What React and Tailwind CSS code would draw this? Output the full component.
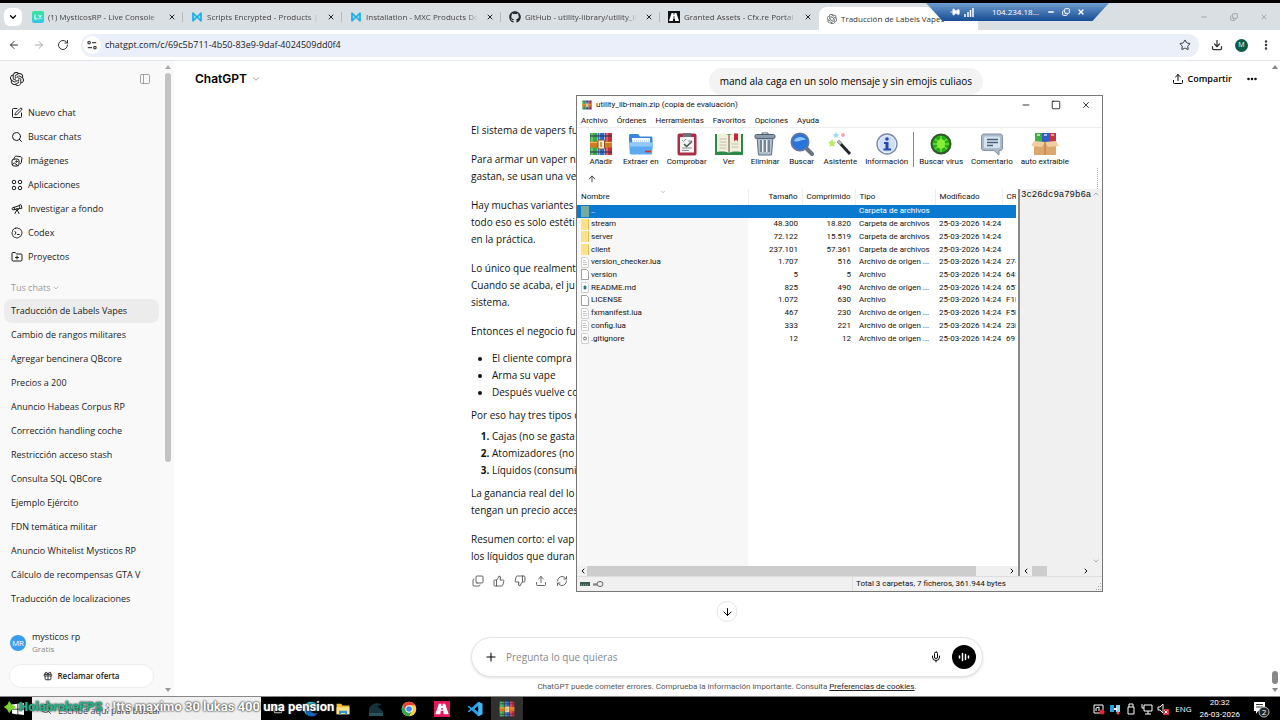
import {
  ArrowDown, ArrowLeft, ArrowRight, ArrowUp, ChevronDown, ChevronLeft, ChevronRight, ChevronUp, Copy, Download,
  Ellipsis, EllipsisVertical, FolderPlus, Gift, Mic, Minus, PanelLeft, Pin, Plus, RefreshCw, RotateCw, Search,
  Square, SquarePen, Star, Telescope, ThumbsDown, ThumbsUp, Upload, X,
} from 'lucide-react';
import { SiOpenai } from 'react-icons/si';
import { FaGithub } from 'react-icons/fa';

const ConsoleIcon = () => (
  <svg viewBox="0 0 12 12" className="size-3 shrink-0">
    <defs>
      <linearGradient id="console" x1="0" y1="0" x2="0" y2="1">
        <stop offset="0" stopColor="#35e59a" />
        <stop offset="1" stopColor="#35c4e8" />
      </linearGradient>
    </defs>
    <rect width="12" height="12" rx="2" fill="url(#console)" />
    <path d="M3 3.5v4.5h2.5M6.5 4l3 4M9.5 4l-3 4" stroke="#d9fff1" strokeWidth="1.2" fill="none" />
  </svg>
);

const MxcIcon = () => (
  <svg viewBox="0 0 12 12" className="size-3 shrink-0">
    <path d="M1 1.500v9L6 6zM11 1.500v9L6 6z" fill="#8fdcf5" />
    <path d="M2 1.500v9M10 1.500v9M2 2l8 8M10 2l-8 8" stroke="#1cade4" strokeWidth="1.600" fill="none" />
  </svg>
);

const CfxIcon = ({ bg, className }) => (
  <svg viewBox="0 0 12 12" className={className}>
    <rect width="12" height="12" fill={bg} />
    <path d="M3.600 2h1.900v1.600h1V2h1.900L11 10H7.200L6.900 7.400H5.100L4.800 10H1z" fill="#fff" />
    <path d="M5.300 5.400h1.400l.1 1H5.200z" fill={bg} />
  </svg>
);

const ImagesIcon = ({ className }) => (
  <svg viewBox="0 0 24 24" className={className} fill="none" stroke="currentColor" strokeWidth="2" strokeLinecap="round">
    <rect x="2" y="8" width="14" height="14" rx="4" />
    <path d="M7 5c.5-2 2-3 4-2.700l8 1c2 .3 3 2 2.700 4l-1 7.500c-.2 1.500-.9 2.300-2 2.700M3 19l3.500-3 7 5" />
    <circle cx="11" cy="13" r="1.500" />
  </svg>
);

const AppsIcon = ({ className }) => (
  <svg viewBox="0 0 24 24" className={className} fill="none" stroke="currentColor" strokeWidth="2">
    <circle cx="6" cy="6" r="3.500" />
    <circle cx="18" cy="6" r="3.500" />
    <circle cx="6" cy="18" r="3.500" />
    <circle cx="18" cy="18" r="3.500" />
  </svg>
);

const CodexIcon = ({ className }) => (
  <svg viewBox="0 0 24 24" className={className} fill="none" stroke="currentColor" strokeWidth="2" strokeLinecap="round">
    <path d="M9 2.500c2-1 4-1 6 .5 3 0 5 2 5.500 4.500 1.500 2 2 4.500.5 7 0 3-2 5-4.500 5.500-2 2-5 2.500-7.500 1-3 0-5-2-5.500-4.500-1.500-2-2-5-.5-7.500C3 5 6 2.500 9 2.500z" />
    <path d="m8 9 2 3-2 3M13 15h3.500" />
  </svg>
);

const RarIcon = ({ className }) => (
  <svg viewBox="0 0 24 24" className={className}>
    <rect x="1" y="1" width="7" height="22" fill="#3da648" />
    <rect x="8.500" y="1" width="7" height="22" fill="#3269c8" />
    <rect x="16" y="1" width="7" height="22" fill="#c82d3b" />
    <path d="M3 1v22M10.500 1v22M18 1v22" stroke="#fff" strokeOpacity=".45" strokeWidth="1.200" />
    <path d="M1 4h22M1 20h22" stroke="#28304f" strokeWidth="1.600" strokeOpacity=".7" />
    <path d="M1 9.500h22v6H1z" fill="#d07a24" />
    <path d="M1 10.500h22" stroke="#f8c05d" strokeWidth="1" />
    <rect x="9" y="8" width="6.500" height="9" rx="1" fill="#f7edd0" stroke="#8a5320" />
    <path d="M12 10v5" stroke="#b98131" strokeWidth="1.500" />
  </svg>
);

const ExtractIcon = ({ className }) => (
  <svg viewBox="0 0 24 24" className={className}>
    <path d="M0 6.500V3.500C0 2.500.6 2 1.500 2H9l2 2.500h11c1 0 1.500.5 1.500 1.500v5H0z" fill="#3a87dc" />
    <path d="M3 6h18v6H3z" fill="#f4f9ff" />
    <path d="M0 10.500h24l-.8 10.500c-.1 1-.7 1.500-1.500 1.500H2.300c-.9 0-1.400-.5-1.500-1.500z" fill="#5da9f0" />
    <path d="M0 10.500h24l-.4 4H.4z" fill="#91caf9" />
    <path d="M3 9h18" stroke="#9db9d8" strokeDasharray="1 1" />
    <path d="M16 19.500h6" stroke="#d83131" strokeWidth="1.700" />
  </svg>
);

const TestIcon = ({ className }) => (
  <svg viewBox="0 0 24 24" className={className}>
    <rect x="2.500" y="1.500" width="19" height="22" rx="2" fill="#ad2f45" />
    <path d="M5 5h14v15.500H5z" fill="#f5f6f4" />
    <path d="M8 1h8v4H8z" fill="#6f737d" />
    <path d="m7 8 1.500 1.500L11 7m2 2h4M7 16h10M7 18.500h7" stroke="#8b9299" fill="none" />
    <path d="m9 12 2.500 2.500L17 9.500" stroke="#3f5a48" strokeWidth="1.600" fill="none" />
  </svg>
);

const BookIcon = ({ className }) => (
  <svg viewBox="0 0 28 24" className={className}>
    <path d="M0 2h28v21H0z" fill="#2d8948" />
    <path d="M2 2c5-1 9-.5 12 1 3-1.500 7-2 12-1v18c-5-.8-9-.4-12 1-3-1.400-7-1.800-12-1z" fill="#f3efdd" />
    <path d="M14 3v18" stroke="#8b8470" strokeWidth="1.500" />
    <path d="M4.500 7h7M4.500 10h7M4.500 13h7M4.500 16h7M16.500 12h7M16.500 15h7" stroke="#c5c0ad" />
    <path d="M19 1.500h4v8l-2-1.800-2 1.800z" fill="#c32639" />
  </svg>
);

const TrashIcon = ({ className }) => (
  <svg viewBox="0 0 24 24" className={className}>
    <path d="M4 5h16l-1.500 18h-13z" fill="#b2bfcc" stroke="#5e7082" />
    <path d="M8 8v12M12 8v12M16 8v12" stroke="#657789" strokeWidth="1.600" />
    <path d="M9.500 8v12M13.500 8v12" stroke="#eef4f8" />
    <rect x="2" y="2.500" width="20" height="4" rx="1.500" fill="#8b9baa" stroke="#4e6073" />
    <path d="M9 2.500V1h6v1.500" stroke="#4e6073" fill="none" />
  </svg>
);

const FindIcon = ({ className }) => (
  <svg viewBox="0 0 24 24" className={className}>
    <path d="m15 15 7 7" stroke="#6b737f" strokeWidth="4" strokeLinecap="round" />
    <circle cx="10" cy="10" r="8.500" fill="#2774dd" stroke="#5c74a8" strokeWidth="2" />
    <path d="M4 9c1-4 9-6 12-1-4-1-7 3-12 1z" fill="#8fc4fa" />
  </svg>
);

const WizardIcon = ({ className }) => (
  <svg viewBox="0 0 24 24" className={className}>
    <path d="m10 9 12 13" stroke="#25262b" strokeWidth="3" />
    <path d="m10 9 3 3" stroke="#aeb2b9" strokeWidth="3" />
    <path d="m4 7 1.300 2.500L8 10l-2 2 .5 3L4 13.500 1.500 15l.5-3-2-2 2.700-.5z" fill="#bce865" />
    <path d="m8 0 1 2 2 .5-1.500 1.500.3 2L8 5l-2 1 .5-2L5 2.500 7 2z" fill="#96dcf5" />
    <circle cx="15" cy="3" r="2" fill="#f5a7b9" />
  </svg>
);

const InfoIcon = ({ className }) => (
  <svg viewBox="0 0 24 24" className={className}>
    <circle cx="12" cy="12" r="10" fill="#e5edfa" stroke="#7988a8" strokeWidth="1.400" />
    <circle cx="12" cy="12" r="8" fill="#cfdef8" />
    <circle cx="12" cy="7" r="1.800" fill="#2649ac" />
    <path d="M9 10h4.500v6.500H16v2H8.500v-2h2V12H9z" fill="#2649ac" />
  </svg>
);

const VirusIcon = ({ className }) => (
  <svg viewBox="0 0 24 24" className={className}>
    <circle cx="12" cy="12" r="9.500" fill="#27a91b" stroke="#31572b" strokeWidth="2" />
    <path d="m6 7 12 10M18 7 6 17M12 4v16M4 12h16" stroke="#68e32e" strokeWidth="1.600" />
    <ellipse cx="12" cy="12" rx="4" ry="5" fill="#85ee35" />
  </svg>
);

const CommentIcon = ({ className }) => (
  <svg viewBox="0 0 24 24" className={className}>
    <path d="M4 2h16c1.700 0 2.500 1 2.500 2.500V16c0 1.500-.8 2.500-2.500 2.500h-1V23l-5-4.500H4c-1.700 0-2.500-1-2.500-2.500V4.500C1.500 3 2.300 2 4 2z" fill="#a9bacb" stroke="#8190a0" />
    <rect x="4" y="4.500" width="16" height="11.500" rx="1" fill="#d6e2ec" />
    <path d="M7 7.500h11M7 10.500h11M7 13.500h6" stroke="#47617a" strokeWidth="1.400" />
  </svg>
);

const SfxIcon = ({ className }) => (
  <svg viewBox="0 0 28 24" className={className}>
    <path d="M4 1h7v10H4z" fill="#3fac45" />
    <path d="M11 1h7v10h-7z" fill="#315fc5" />
    <path d="M18 1h7v10h-7z" fill="#c93242" />
    <path d="M6 3h3M13 3h3M20 3h3" stroke="#fff" strokeOpacity=".6" strokeWidth="2" />
    <path d="M3 10h22v13H3z" fill="#dda66f" />
    <path d="m3 9-3 5 11 1 3-5zM25 9l3 5-11 1-3-5z" fill="#f2cda1" />
    <path d="M14 10v13" stroke="#b87a45" />
  </svg>
);

const VsCodeIcon = ({ className }) => (
  <svg viewBox="0 0 24 24" className={className}>
    <path d="m17 1 6 3v16l-6 3L7 13.800l-4 3-2-1L5 12 1 8.300l2-1 4 2.900zm0 6-6 5 6 5z" fill="#2b9fe6" />
    <path d="m17 1 6 3v16l-6 3z" fill="#43b4f2" />
  </svg>
);

const ChromeIcon = ({ className }) => (
  <svg viewBox="0 0 24 24" className={className}>
    <circle cx="12" cy="12" r="11" fill="#ffcd40" />
    <path d="M2.500 6.500A11 11 0 0 1 21.500 6.500H12L7.200 14.700z" fill="#e94235" />
    <path d="M2.500 6.500A11 11 0 0 0 12 23l4.800-8.300H7.200z" fill="#34a353" />
    <circle cx="12" cy="12" r="5.500" fill="#fff" />
    <circle cx="12" cy="12" r="4.200" fill="#4285f4" />
  </svg>
);

const EdgeIcon = ({ className }) => (
  <svg viewBox="0 0 24 24" className={className}>
    <path d="M1 12C1 5 6 1 12 1c7 0 11 5 11 9 0 3-2 5-5 5-2 0-3-1-2-2 0-4-8-6-11-1-2 4 1 9 6 11C5 22 1 17 1 12z" fill="#2db7d2" />
    <path d="M5 12c-2 4 1 9 6 11 5 1 9-2 11-5-6 2-11-1-11-6-2-2-5-2-6 0z" fill="#1767c0" />
  </svg>
);

const ExplorerIcon = ({ className }) => (
  <svg viewBox="0 0 24 24" className={className}>
    <path d="M1 3h8l2 3h12v15H1z" fill="#f2bd3a" />
    <path d="M1 9h22v12H1z" fill="#fbe08a" />
    <path d="M5 22v-7h14v7h-4v-3H9v3z" fill="#3a94d3" />
  </svg>
);

const FileIcon = ({ kind }) => {
  if (kind === 'up') return <span className="block h-[11px] w-2 bg-[#77ab9f]" />;
  if (kind === 'folder') return <span className="block h-[11px] w-2 rounded-[1px] border-r border-[#e2bf55] bg-[#fbe288]" />;
  return (
    <svg viewBox="0 0 8 11" className="h-[11px] w-2" fill="#fff" stroke={kind === 'file' ? '#888' : '#c4c4c4'} strokeWidth=".8">
      <path d="M.5.500h5l2 2v8h-7z" />
      {kind === 'code' && <path d="M2 3.500h3M2 5.500h4M2 7.500h4" stroke="#b5b5b5" />}
      {kind === 'md' && <path d="M3 4h2v3H3z" fill="#28758a" stroke="#28758a" />}
      {kind === 'gear' && <circle cx="4" cy="5.500" r="1.500" stroke="#555" />}
    </svg>
  );
};

const tabs = [
  { title: '(1) MysticosRP - Live Console', icon: <ConsoleIcon /> },
  { title: 'Scripts Encrypted - Products | M', icon: <MxcIcon /> },
  { title: 'Installation - MXC Products Doc', icon: <MxcIcon /> },
  { title: 'GitHub - utility-library/utility_lib', icon: <FaGithub className="size-3 shrink-0 text-[#24292f]" /> },
  { title: 'Granted Assets - Cfx.re Portal', icon: <CfxIcon bg="#101216" className="size-3 shrink-0" /> },
];

const navItems = [
  { label: 'Nuevo chat', Icon: SquarePen },
  { label: 'Buscar chats', Icon: Search },
  { label: 'Imágenes', Icon: ImagesIcon },
  { label: 'Aplicaciones', Icon: AppsIcon },
  { label: 'Investigar a fondo', Icon: Telescope },
  { label: 'Codex', Icon: CodexIcon },
  { label: 'Proyectos', Icon: FolderPlus },
];

const chats = [
  'Traducción de Labels Vapes', 'Cambio de rangos militares', 'Agregar bencinera QBcore', 'Precios a 200',
  'Anuncio Habeas Corpus RP', 'Corrección handling coche', 'Restricción acceso stash', 'Consulta SQL QBCore',
  'Ejemplo Ejército', 'FDN temática militar', 'Anuncio Whitelist Mysticos RP', 'Cálculo de recompensas GTA V',
  'Traducción de localizaciones',
];

const tools = [
  { label: 'Añadir', Icon: RarIcon },
  { label: 'Extraer en', Icon: ExtractIcon },
  { label: 'Comprobar', Icon: TestIcon },
  { label: 'Ver', Icon: BookIcon, wide: true },
  { label: 'Eliminar', Icon: TrashIcon },
  { label: 'Buscar', Icon: FindIcon },
  { label: 'Asistente', Icon: WizardIcon },
  { label: 'Información', Icon: InfoIcon },
];

const moreTools = [
  { label: 'Buscar virus', Icon: VirusIcon },
  { label: 'Comentario', Icon: CommentIcon },
  { label: 'auto extraíble', Icon: SfxIcon, wide: true },
];

const date = '25-03-2026 14:24';
const files = [
  ['up', '..', '', '', 'Carpeta de archivos', '', ''],
  ['folder', 'stream', '48.300', '18.820', 'Carpeta de archivos', date, ''],
  ['folder', 'server', '72.122', '15.519', 'Carpeta de archivos', date, ''],
  ['folder', 'client', '237.101', '57.361', 'Carpeta de archivos', date, ''],
  ['code', 'version_checker.lua', '1.707', '516', 'Archivo de origen ...', date, '274'],
  ['file', 'version', '5', '5', 'Archivo', date, '645'],
  ['md', 'README.md', '825', '490', 'Archivo de origen ...', date, '657'],
  ['file', 'LICENSE', '1.072', '630', 'Archivo', date, 'F1E'],
  ['code', 'fxmanifest.lua', '467', '230', 'Archivo de origen ...', date, 'F5D'],
  ['code', 'config.lua', '333', '221', 'Archivo de origen ...', date, '23E'],
  ['gear', '.gitignore', '12', '12', 'Archivo de origen ...', date, '691'],
];

const BrowserChrome = () => (
  <header className="shrink-0 border-b border-[#e3e5e8] bg-white text-[#444]">
    <div className="flex h-[27px] items-center bg-[#dadfe3] pl-1">
      <button aria-label="Buscar pestañas" className="flex h-[18px] w-[18px] items-center justify-center rounded-md bg-white">
        <ChevronDown className="size-2.5 text-black" strokeWidth={3} />
      </button>
      <div className="ml-[2px] flex h-full items-center">
        {tabs.map((tab, i) => (
          <div key={i} className="flex w-[159px] items-center gap-1 pl-2">
            {tab.icon}
            <span className="w-[112px] overflow-hidden whitespace-nowrap text-[8px] [mask-image:linear-gradient(to_right,black_90%,transparent)]">{tab.title}</span>
            <button aria-label="Cerrar" className="ml-1"><X className="size-2 text-[#222]" strokeWidth={3} /></button>
            <span className={i < 4 ? 'ml-auto h-2.5 w-px bg-[#b5babf]' : 'ml-auto'} />
          </div>
        ))}
        <div className="flex h-[23px] w-[159px] items-center gap-1 self-end rounded-t-lg bg-white pl-2">
          <SiOpenai className="size-2.5 shrink-0 text-[#555]" />
          <span className="whitespace-nowrap text-[8px] text-[#333]">Traducción de Labels Vapes</span>
        </div>
      </div>
      <div className="ml-auto flex gap-[22px] pr-3 text-[#888]">
        <Minus className="size-2" />
        <Copy className="size-2 -scale-y-100" />
        <X className="size-2" />
      </div>
    </div>
    <div className="flex h-[30px] items-center pr-2">
      <div className="flex w-[81px] justify-between pl-2 pr-3">
        <ArrowLeft className="size-3 text-[#333]" />
        <ArrowRight className="size-3 text-[#aaa]" />
        <RotateCw className="size-3 text-[#333]" />
      </div>
      <div className="flex h-[23px] flex-1 items-center rounded-full bg-[#ebeffa] pl-[2px] pr-2">
        <span className="flex size-[18px] items-center justify-center rounded-full bg-white">
          <svg viewBox="0 0 12 12" className="size-2.5" fill="none" stroke="#444" strokeWidth="1.500">
            <circle cx="2.500" cy="3" r="1.500" />
            <path d="M6 3h5M1 9h5" />
            <circle cx="9.500" cy="9" r="1.500" />
          </svg>
        </span>
        <input aria-label="Dirección" className="ml-1 flex-1 bg-transparent text-[9px] text-[#222] outline-none" defaultValue="chatgpt.com/c/69c5b711-4b50-83e9-9daf-4024509dd0f4" />
        <button aria-label="Favorito"><Star className="size-3 text-[#333]" /></button>
      </div>
      <div className="ml-3 flex items-center gap-3">
        <Download className="size-3 text-[#333]" strokeWidth={2.5} />
        <span className="flex size-[13px] items-center justify-center rounded-full bg-[#0b5c45] text-[7px] text-white">M</span>
        <EllipsisVertical className="size-3 text-[#333]" strokeWidth={3} />
      </div>
    </div>
  </header>
);

const Sidebar = () => (
  <aside className="flex w-[174px] shrink-0 bg-[#f9f9f9] text-[9px] text-[#1a1a1a]">
    <div className="flex min-w-0 flex-1 flex-col pl-1 pr-[2px]">
      <div className="flex h-9 items-center justify-between pl-1.5 pr-2">
        <SiOpenai className="size-3.5" />
        <PanelLeft className="size-3 text-[#888]" strokeWidth={1.5} />
      </div>
      <nav className="mt-1">
        {navItems.map(({ label, Icon }) => (
          <a key={label} href="#" className="flex h-6 items-center gap-[5px] pl-[7px]">
            <Icon className="size-3" />
            {label}
          </a>
        ))}
      </nav>
      <button className="mt-[11px] flex h-4 items-center gap-[2px] pl-[7px] text-[#999]">
        Tus chats <ChevronDown className="size-2" />
      </button>
      <ul className="mt-[3px]">
        {chats.map((chat, i) => (
          <li key={chat}>
            <a href="#" className={`flex h-6 items-center whitespace-nowrap rounded-lg pl-[7px] ${i === 0 ? 'bg-[#ececec]' : ''}`}>{chat}</a>
          </li>
        ))}
      </ul>
      <div className="mt-auto flex items-center gap-1.5 pl-1.5">
        <span className="flex size-4 items-center justify-center rounded-full bg-[#3b9cee] text-[8px] text-white">MR</span>
        <div className="leading-3">
          <p>mysticos rp</p>
          <p className="text-[8px] text-[#888]">Gratis</p>
        </div>
      </div>
      <button className="mx-[5px] mb-2 mt-[9px] flex h-6 items-center justify-center gap-1 rounded-full border border-[#eee] bg-white text-[8px] font-semibold">
        <Gift className="size-2.5" /> Reclamar oferta
      </button>
    </div>
    <div className="flex w-[13px] flex-col items-center py-1">
      <svg viewBox="0 0 6 4" className="h-1 w-1.5 fill-[#aaa]"><path d="M0 4 3 0l3 4z" /></svg>
      <span className="mt-1 h-[389px] w-1.5 rounded-full bg-[#c3c3c3]" />
      <svg viewBox="0 0 6 4" className="mt-auto h-1 w-1.5 fill-[#999]"><path d="M0 0h6L3 4z" /></svg>
    </div>
  </aside>
);

const Conversation = () => (
  <article className="mt-[27px] whitespace-nowrap leading-[17px] text-[#111]">
    <div className="space-y-3">
      <p>El sistema de vapers fu</p>
      <p>Para armar un vaper ne<br />gastan, se usan una ve</p>
      <p>Hay muchas variantes<br />todo eso es solo estéti<br />en la práctica.</p>
      <p>Lo único que realment<br />Cuando se acaba, el ju<br />sistema.</p>
      <p>Entonces el negocio fu</p>
    </div>
    <ul className="mt-2.5 list-disc pl-[21px]">
      <li>El cliente compra</li>
      <li>Arma su vape</li>
      <li>Después vuelve co</li>
    </ul>
    <p className="mt-1.5">Por eso hay tres tipos d</p>
    <ol className="mt-1 list-decimal pl-[21px] marker:font-bold">
      <li>Cajas (no se gasta</li>
      <li>Atomizadores (no</li>
      <li>Líquidos (consumi</li>
    </ol>
    <div className="mt-1.5 space-y-3">
      <p>La ganancia real del lo<br />tengan un precio acces</p>
      <p>Resumen corto: el vap<br />los líquidos que duran</p>
    </div>
    <div className="mt-2.5 flex gap-[9px] pl-[1px] text-[#555]">
      {[Copy, ThumbsUp, ThumbsDown, Upload, RefreshCw].map((Icon, i) => (
        <button key={i} aria-label="Acción"><Icon className={i === 0 ? 'size-3 -scale-y-100' : 'size-3'} strokeWidth={1.8} /></button>
      ))}
    </div>
  </article>
);

const Chat = () => (
  <main className="relative flex min-w-0 flex-1 flex-col bg-white">
    <div className="absolute inset-x-0 top-0 flex h-9 items-center justify-between pl-[21px] pr-[22px]">
      <button className="flex items-center gap-1 font-[Inter] text-[12px] font-semibold">
        ChatGPT <ChevronDown className="size-2.5 text-[#888]" />
      </button>
      <div className="flex items-center gap-3.5">
        <button className="flex items-center gap-1 text-[9px] font-semibold"><Upload className="size-3" /> Compartir</button>
        <button aria-label="Más"><Ellipsis className="size-3" strokeWidth={3} /></button>
      </div>
    </div>
    <div className="mx-auto flex w-[512px] max-w-full flex-1 flex-col pt-[7px] text-[10px]">
      <p className="self-end rounded-full bg-[#f3f3f3] px-[11px] leading-[27px]">mand ala caga en un solo mensaje y sin emojis culiaos</p>
      <Conversation />
      <form className="mt-auto flex h-10 items-center rounded-full border border-[#e4e4e4] bg-white pl-3 pr-1.5 shadow-sm">
        <button type="button" aria-label="Adjuntar"><Plus className="size-3.5" strokeWidth={1.8} /></button>
        <input aria-label="Mensaje" placeholder="Pregunta lo que quieras" className="ml-2 flex-1 bg-transparent text-[10px] outline-none placeholder:text-[#888]" />
        <button type="button" aria-label="Dictar" className="mr-2.5"><Mic className="size-3" /></button>
        <button type="button" aria-label="Voz" className="flex size-6 items-center justify-center rounded-full bg-black">
          <svg viewBox="0 0 12 12" className="size-3" stroke="#fff" strokeWidth="1.500" strokeLinecap="round">
            <path d="M1.500 5v2M4.500 2.500v7M7.500 3.500v5M10.500 5v2" />
          </svg>
        </button>
      </form>
      <p className="py-[3px] text-center font-[Roboto] text-[8px] leading-[13px] text-[#555]">
        ChatGPT puede cometer errores. Comprueba la información importante. Consulta <a href="#" className="text-[#222] underline">Preferencias de cookies</a>.
      </p>
    </div>
    <button aria-label="Bajar" className="absolute bottom-[74px] left-1/2 flex size-[21px] -translate-x-1/2 items-center justify-center rounded-full border border-[#e6e6e6] bg-white">
      <ArrowDown className="size-3" />
    </button>
    <div className="absolute inset-y-0 right-0 flex w-2.5 flex-col items-center py-1">
      <svg viewBox="0 0 6 4" className="h-1 w-1.5 fill-[#888]"><path d="M0 4 3 0l3 4z" /></svg>
      <span className="mb-1 mt-auto h-[13px] w-1.5 rounded-full bg-[#888]" />
      <svg viewBox="0 0 6 4" className="h-1 w-1.5 fill-[#888]"><path d="M0 0h6L3 4z" /></svg>
    </div>
  </main>
);

const Tool = ({ label, Icon, wide }) => (
  <button className="flex min-w-9 flex-col items-center px-1">
    <Icon className={wide ? 'h-6 w-7' : 'size-6'} />
    <span className="leading-3">{label}</span>
  </button>
);

const Archiver = () => (
  <section className="absolute left-[576px] top-[95px] flex h-[497px] w-[527px] flex-col border border-[#777] bg-white font-[Roboto] text-[8px] text-[#111]">
    <div className="flex h-[18px] shrink-0 items-center pl-[5px] pr-[11px]">
      <RarIcon className="size-2.5" />
      <span className="ml-1">utility_lib-main.zip (copia de evaluación)</span>
      <div className="ml-auto flex gap-5">
        <Minus className="size-2.5" />
        <Square className="size-2.5" />
        <X className="size-2.5" />
      </div>
    </div>
    <nav className="flex h-[14px] shrink-0 items-center gap-[9px] border-b border-[#eee] pl-1">
      {['Archivo', 'Órdenes', 'Herramientas', 'Favoritos', 'Opciones', 'Ayuda'].map((item) => (
        <button key={item}>{item}</button>
      ))}
    </nav>
    <div className="flex shrink-0 whitespace-nowrap pl-1.5 pt-1">
      {tools.map((tool) => <Tool key={tool.label} {...tool} />)}
      <span className="mx-[1px] h-[35px] w-px bg-[#888]" />
      {moreTools.map((tool) => <Tool key={tool.label} {...tool} />)}
    </div>
    <div className="mr-1 flex h-[21px] shrink-0 items-center border-r border-dotted border-[#aaa] pl-2.5">
      <button aria-label="Subir"><ArrowUp className="size-2.5" strokeWidth={1.8} /></button>
    </div>
    <div className="flex min-h-0 flex-1">
      <div className="flex min-w-0 flex-1 flex-col border-r-2 border-[#888]">
        <div className="relative flex-1 overflow-hidden bg-[linear-gradient(to_right,#f7f7f7_171px,#fff_171px)] pr-[2px]">
          <ChevronUp className="absolute left-[83px] top-0 size-1.5 rotate-180 text-[#888]" />
          <table className="h-[156px] w-full table-fixed border-collapse whitespace-nowrap leading-[10px]">
            <colgroup>
              <col className="w-[171px]" />
              <col className="w-[54px]" />
              <col className="w-[53px]" />
              <col className="w-[80px]" />
              <col className="w-[67px]" />
              <col />
            </colgroup>
            <thead>
              <tr className="h-4 bg-white text-left">
                <th className="border-r border-[#eee] pl-1 font-normal">Nombre</th>
                <th className="border-r border-[#eee] pr-1 text-right font-normal">Tamaño</th>
                <th className="border-r border-[#eee] pr-1 text-right font-normal">Comprimido</th>
                <th className="border-r border-[#eee] pl-1 font-normal">Tipo</th>
                <th className="border-r border-[#eee] pl-1 font-normal">Modificado</th>
                <th className="overflow-hidden pl-1 font-normal">CR</th>
              </tr>
            </thead>
            <tbody>
              {files.map(([kind, name, size, packed, type, modified, crc]) => (
                <tr key={name} className={kind === 'up' ? 'bg-[#0a7ad1] text-white' : ''}>
                  <td className="pl-1"><span className="flex items-center gap-[2px]"><FileIcon kind={kind} />{name}</span></td>
                  <td className="pr-1 text-right">{size}</td>
                  <td className="pr-1 text-right">{packed}</td>
                  <td className="pl-1">{type}</td>
                  <td className="pl-1">{modified}</td>
                  <td className="overflow-hidden pl-1">{crc}</td>
                </tr>
              ))}
            </tbody>
          </table>
        </div>
        <div className="flex h-2.5 items-center justify-between bg-[#f0f0f0] px-[2px]">
          <ChevronLeft className="size-2" strokeWidth={3} />
          <span className="mr-8 h-full flex-1 bg-[#cdcdcd]" />
          <ChevronRight className="size-2" strokeWidth={3} />
        </div>
      </div>
      <div className="flex w-[82px] flex-col bg-[#f0f0f0]">
        <div className="flex flex-1 justify-between">
          <p className="pl-[1px] pt-[1px] font-['Liberation_Mono'] text-[9px] leading-[11px]">3c26dc9a79b6a</p>
          <div className="flex flex-col justify-between py-[1px] pr-[2px] text-[#888]">
            <ChevronUp className="size-2" />
            <ChevronDown className="size-2" />
          </div>
        </div>
        <div className="flex h-2.5 items-center px-[2px]">
          <ChevronLeft className="size-2" strokeWidth={3} />
          <span className="ml-[2px] h-full w-[15px] bg-[#cdcdcd]" />
          <ChevronRight className="ml-auto mr-2.5 size-2" strokeWidth={3} />
        </div>
      </div>
    </div>
    <div className="flex h-[15px] shrink-0 items-center border-t border-[#ddd] bg-[#f0f0f0]">
      <svg viewBox="0 0 24 10" className="ml-[3px] h-2.5 w-6">
        <path d="M0 3h10v4H0z" fill="#375b50" />
        <path d="M1 6h8" stroke="#85d0a5" strokeDasharray="1 1" />
        <path d="M13 5h6M14 5v2M16 5v2" stroke="#666" />
        <ellipse cx="20" cy="5" rx="3" ry="2.500" fill="#eee" stroke="#666" />
      </svg>
      <span className="ml-auto flex h-full w-[242px] items-center border-l border-[#ddd] pl-[3px]">Total 3 carpetas, 7 ficheros, 361.944 bytes</span>
      <svg viewBox="0 0 8 8" className="mt-auto size-2 fill-[#aaa]"><path d="M6 0h1v1H6zM4 3h1v1H4zM6 3h1v1H6zM2 6h1v1H2zM4 6h1v1H4zM6 6h1v1H6z" /></svg>
    </div>
  </section>
);

const RemoteBar = () => (
  <div className="absolute left-[926px] top-[3px] flex h-[18px] w-[183px] items-center bg-linear-to-b from-[#6d9cd0] to-[#174d93] pl-6 pr-6 text-[8px] text-white [clip-path:polygon(0_0,100%_0,91%_100%,9%_100%)]">
    <Pin className="size-2.5 rotate-90 fill-white" />
    <svg viewBox="0 0 10 10" className="ml-1 size-2.5" stroke="#fff" strokeWidth="1.500"><path d="M1 10V7M4 10V5M6.500 10V3M9 10V1" /></svg>
    <span className="ml-auto">104.234.18...</span>
    <div className="ml-2 flex gap-[7px]">
      <Minus className="size-2" strokeWidth={4} />
      <Copy className="size-2 -scale-y-100" strokeWidth={3} />
      <X className="size-2" strokeWidth={4} />
    </div>
  </div>
);

const Taskbar = () => (
  <footer className="relative flex h-6 shrink-0 items-center border-t border-[#888] bg-black text-[8px] text-white">
    <div className="flex w-8 justify-center">
      <svg viewBox="0 0 12 12" className="ml-1 size-3 fill-white"><path d="M0 1.500 5.500.700v5H0zM6.200.6 12 0v5.700H6.200zM0 6.400h5.500v5L0 10.500zM6.200 6.400H12V12l-5.800-.7z" /></svg>
    </div>
    <div className="flex h-full w-[229px] items-center bg-[#f0f0f0] pl-2 text-[#555]">
      <Search className="size-3" />
      <input aria-label="Buscar" placeholder="Escribe aquí para buscar" className="ml-1.5 mt-1 flex-1 bg-transparent text-[9px] placeholder:text-[#444]" />
    </div>
    <div className="flex h-full items-center">
      <span className="flex w-[34px] justify-center"><Square className="size-2.5" /></span>
      <span className="flex w-8 justify-center"><EdgeIcon className="size-4" /></span>
      <span className="flex w-8 justify-center"><ExplorerIcon className="size-3.5" /></span>
      <span className="flex w-[34px] justify-center">
        <svg viewBox="0 0 16 16" className="size-4"><path d="M1 7c3-5 9-6 13-3l-5 1 6 5v5H1z" fill="#16323a" /><path d="M1 12h14v3H1z" fill="#28545c" /></svg>
      </span>
      <span className="flex w-8 justify-center"><ChromeIcon className="size-4" /></span>
      <span className="flex w-[34px] justify-center"><CfxIcon bg="#e5175c" className="size-4" /></span>
      <span className="flex w-8 justify-center"><VsCodeIcon className="size-4" /></span>
      <span className="flex h-full w-8 items-center justify-center bg-[#303030]"><RarIcon className="size-4" /></span>
    </div>
    <div className="ml-auto flex h-full items-center gap-1 pr-2.5">
      <svg viewBox="0 0 12 12" className="size-3" fill="none" stroke="#fff"><path d="M1 2h9v8H1zM3 8V5l3-1v4" /><circle cx="9" cy="9" r="2.500" fill="#e2233d" stroke="none" /></svg>
      <svg viewBox="0 0 12 12" className="size-3"><path d="M1 2h4v7H1z" fill="#23a3ed" /><path d="M7 2h4v7H7z" fill="#8edcf7" /><path d="M5 5h3v2H5z" fill="#fff" /><circle cx="9" cy="10" r="1.500" fill="#e85555" /></svg>
      <svg viewBox="0 0 12 12" className="size-3" fill="none" stroke="#fff"><path d="M4 4V1h4v3M3 4h6v7H3z" /></svg>
      <svg viewBox="0 0 12 12" className="size-3" fill="none" stroke="#fff"><path d="M3 2h8v6H3zM7 8v3M4 11h6M1 1v4h2" /></svg>
      <svg viewBox="0 0 12 12" className="size-3" fill="none" stroke="#fff"><path d="M1 4h2l3-3v9L3 7H1z" /><path d="M6 6h6v6H6z" fill="#d6293d" stroke="none" /><path d="m7.500 7.500 3 3m0-3-3 3" /></svg>
      <span className="ml-[2px]">ENG</span>
      <div className="ml-1 text-center font-[Roboto] leading-3"><p>20:32</p><p>26-03-2026</p></div>
      <svg viewBox="0 0 18 18" className="ml-2 size-[18px]">
        <path d="M2 2h11v9H6l-2 3v-3H2z" fill="#fff" />
        <path d="M4 4.500h7M4 7h7" stroke="#333" />
        <circle cx="12" cy="12" r="5" fill="#222" stroke="#bbb" />
        <text x="12" y="15" textAnchor="middle" fontSize="8" fill="#fff">2</text>
      </svg>
    </div>
    <p className="absolute left-0 top-0 flex items-center whitespace-nowrap font-[Roboto] text-[13px] font-bold leading-5 text-white [text-shadow:0_0_2px_#333,0_0_2px_#333]">
      <svg viewBox="0 0 16 16" className="ml-[3px] mr-[2px] size-3.5"><path d="m7 1 3 4 5 3-5 3-3 4-2-4-4-3 4-3z" fill="#78d42b" /></svg>
      <span className="text-[#25b58a]">HolabrokeFPS</span>
      <span className="whitespace-pre"> : !tts maximo 30 lukas 400 una pension</span>
    </p>
  </footer>
);

export default function App() {
  return (
    <div className="relative flex h-screen flex-col overflow-hidden border-t-[3px] border-black bg-white font-['Open_Sans',sans-serif]">
      <BrowserChrome />
      <div className="flex min-h-0 flex-1">
        <Sidebar />
        <Chat />
      </div>
      <Taskbar />
      <div className="absolute inset-x-0 -top-[3px]">
        <RemoteBar />
        <Archiver />
      </div>
    </div>
  );
}
